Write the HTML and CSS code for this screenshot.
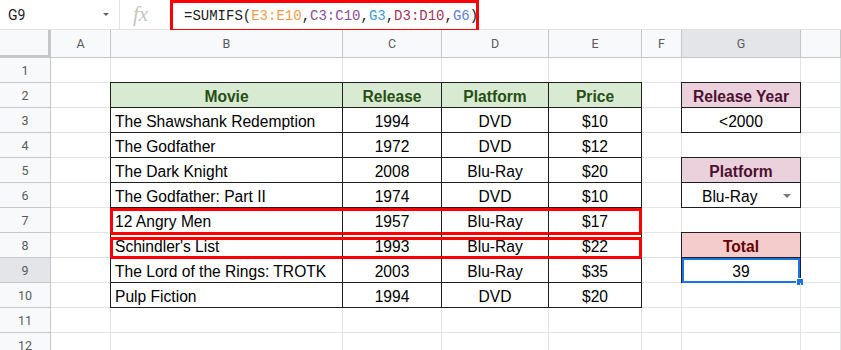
FILE: index.html
```html
<!DOCTYPE html>
<html lang="en">
<head>
    <meta charset="UTF-8">
    <meta name="viewport" content="width=device-width, initial-scale=1.0">
    <title>SUMIFS - Sheet</title>
    <link rel="stylesheet" href="styles.css">
</head>
<body>
    <div class="topbar">
        <div class="namebox"><span>G9</span><span class="caret"></span></div>
        <div class="fx">fx</div>
        <div class="formula">=SUMIFS(<span class="r1">E3:E10</span>,<span class="r2">C3:C10</span>,<span class="r3">G3</span>,<span class="r4">D3:D10</span>,<span class="r5">G6</span>)</div>
        <div class="rest"></div>
    </div>

    <div class="sheet">
        <div class="row head">
            <div class="corner"></div>
            <div class="ch">A</div>
            <div class="ch">B</div>
            <div class="ch">C</div>
            <div class="ch">D</div>
            <div class="ch">E</div>
            <div class="ch">F</div>
            <div class="ch sel">G</div>
            <div class="ch"></div>
        </div>

        <div class="row">
            <div class="rh">1</div>
            <div class="c"></div><div class="c"></div><div class="c"></div><div class="c"></div>
            <div class="c"></div><div class="c"></div><div class="c"></div><div class="c"></div>
        </div>

        <div class="row">
            <div class="rh">2</div>
            <div class="c"></div>
            <div class="c t th tl tt">Movie</div>
            <div class="c t th tt">Release</div>
            <div class="c t th tt">Platform</div>
            <div class="c t th tt">Price</div>
            <div class="c"></div>
            <div class="c t gh tl tt">Release Year</div>
            <div class="c"></div>
        </div>

        <div class="row">
            <div class="rh">3</div>
            <div class="c"></div>
            <div class="c t tl">The Shawshank Redemption</div>
            <div class="c t ctr">1994</div>
            <div class="c t ctr">DVD</div>
            <div class="c t ctr">$10</div>
            <div class="c"></div>
            <div class="c t tl ctr">&lt;2000</div>
            <div class="c"></div>
        </div>

        <div class="row">
            <div class="rh">4</div>
            <div class="c"></div>
            <div class="c t tl">The Godfather</div>
            <div class="c t ctr">1972</div>
            <div class="c t ctr">DVD</div>
            <div class="c t ctr">$12</div>
            <div class="c"></div>
            <div class="c"></div>
            <div class="c"></div>
        </div>

        <div class="row">
            <div class="rh">5</div>
            <div class="c"></div>
            <div class="c t tl">The Dark Knight</div>
            <div class="c t ctr">2008</div>
            <div class="c t ctr">Blu-Ray</div>
            <div class="c t ctr">$20</div>
            <div class="c"></div>
            <div class="c t gh tl tt">Platform</div>
            <div class="c"></div>
        </div>

        <div class="row">
            <div class="rh">6</div>
            <div class="c"></div>
            <div class="c t tl">The Godfather: Part II</div>
            <div class="c t ctr">1974</div>
            <div class="c t ctr">DVD</div>
            <div class="c t ctr">$10</div>
            <div class="c"></div>
            <div class="c t tl dd"><span>Blu-Ray</span><span class="arrow"></span></div>
            <div class="c"></div>
        </div>

        <div class="row">
            <div class="rh">7</div>
            <div class="c"></div>
            <div class="c t tl">12 Angry Men</div>
            <div class="c t ctr">1957</div>
            <div class="c t ctr">Blu-Ray</div>
            <div class="c t ctr">$17</div>
            <div class="c"></div>
            <div class="c"></div>
            <div class="c"></div>
            <div class="hl hl-a"></div>
        </div>

        <div class="row">
            <div class="rh">8</div>
            <div class="c"></div>
            <div class="c t tl">Schindler's List</div>
            <div class="c t ctr">1993</div>
            <div class="c t ctr">Blu-Ray</div>
            <div class="c t ctr">$22</div>
            <div class="c"></div>
            <div class="c t gt tl tt">Total</div>
            <div class="c"></div>
            <div class="hl hl-b"></div>
        </div>

        <div class="row">
            <div class="rh sel">9</div>
            <div class="c"></div>
            <div class="c t tl">The Lord of the Rings: TROTK</div>
            <div class="c t ctr">2003</div>
            <div class="c t ctr">Blu-Ray</div>
            <div class="c t ctr">$35</div>
            <div class="c"></div>
            <div class="c t tl ctr cur">39</div>
            <div class="c"></div>
        </div>

        <div class="row">
            <div class="rh">10</div>
            <div class="c"></div>
            <div class="c t tl">Pulp Fiction</div>
            <div class="c t ctr">1994</div>
            <div class="c t ctr">DVD</div>
            <div class="c t ctr">$20</div>
            <div class="c"></div>
            <div class="c"></div>
            <div class="c"></div>
        </div>

        <div class="row">
            <div class="rh">11</div>
            <div class="c"></div><div class="c"></div><div class="c"></div><div class="c"></div>
            <div class="c"></div><div class="c"></div><div class="c"></div><div class="c"></div>
        </div>

        <div class="row">
            <div class="rh">12</div>
            <div class="c"></div><div class="c"></div><div class="c"></div><div class="c"></div>
            <div class="c"></div><div class="c"></div><div class="c"></div><div class="c"></div>
        </div>
    </div>
</body>
</html>
```

FILE: styles.css
```css
body {
    margin: 0;
    background: #fff;
    font-family: "Liberation Sans", Arial, sans-serif;
    overflow: hidden;
}

/* formula bar */
.topbar {
    display: flex;
    height: 29px;
    border-bottom: 1px solid #e1e3e1;
}
.namebox {
    width: 120px;
    box-sizing: border-box;
    border-right: 1px solid #e1e3e1;
    display: flex;
    align-items: center;
    justify-content: space-between;
    padding: 0 10px 0 8px;
    font: 14px Roboto, sans-serif;
    color: #202124;
}
.caret {
    border-left: 3px solid transparent;
    border-right: 3px solid transparent;
    border-top: 3px solid #5f6368;
}
.fx {
    width: 50px;
    box-sizing: border-box;
    padding-left: 13px;
    display: flex;
    align-items: center;
    font: italic 21px "Liberation Serif", serif;
    color: #c4c4c4;
}
.formula {
    position: relative;
    width: 309px;
    box-sizing: border-box;
    padding: 2px 0 0 14px;
    display: flex;
    align-items: center;
    font: 14px "Liberation Mono", monospace;
    color: #202124;
}
.formula::after {
    content: "";
    position: absolute;
    left: 0;
    top: 0;
    right: 0;
    bottom: -3px;
    border: 3px solid #ff0000;
}
.r1 { color: #f29b4b; }
.r2 { color: #8a4d9e; }
.r3 { color: #3e9ad6; }
.r4 { color: #a3365a; }
.r5 { color: #5b80e2; }

/* grid */
.row {
    position: relative;
    display: grid;
    grid-template-columns: 51px 60px 232px 99px 107px 93px 40px 119px minmax(0, 1fr);
    height: 25px;
}
.row > div {
    box-sizing: border-box;
}
.head {
    height: 28px;
}
.corner {
    background: #f8f9fa;
    border-right: 3px solid #c4c7c5;
    border-bottom: 3px solid #c4c7c5;
}
.ch, .rh {
    background: #f8f9fa;
    border-right: 1px solid #c4c7c5;
    border-bottom: 1px solid #c4c7c5;
    display: flex;
    align-items: center;
    justify-content: center;
    font: 12.5px Roboto, sans-serif;
    color: #575a5e;
}
.sel {
    background: #e3e5e8;
}
.c {
    border-right: 1px solid #e2e3e3;
    border-bottom: 1px solid #e2e3e3;
    display: flex;
    align-items: flex-end;
    padding: 0 4px 1px;
    font-size: 15.6px;
    line-height: 18px;
    color: #000;
    white-space: nowrap;
}

/* bordered table cells */
.t {
    border-color: #1f1f1f;
}
.tl {
    box-shadow: -1px 0 0 #1f1f1f;
}
.tt {
    box-shadow: 0 -1px 0 #1f1f1f;
}
.tl.tt {
    box-shadow: -1px 0 0 #1f1f1f, 0 -1px 0 #1f1f1f, -1px -1px 0 #1f1f1f;
}
.ctr, .th, .gh, .gt {
    justify-content: center;
}
.th {
    background: #d9ead3;
    color: #274e13;
    font-weight: bold;
}
.gh {
    background: #ead1dc;
    color: #4c1130;
    font-weight: bold;
}
.gt {
    background: #f4cccc;
    color: #660000;
    font-weight: bold;
}
.dd {
    justify-content: space-between;
    padding: 0 9px 1px 20px;
}
.arrow {
    align-self: center;
    border-left: 4px solid transparent;
    border-right: 4px solid transparent;
    border-top: 4px solid #7b7b7b;
    margin-top: 2px;
}

/* annotation boxes */
.hl {
    position: absolute;
    left: 110px;
    width: 532px;
    box-sizing: border-box;
    border: 3px solid #ff0000;
}
.hl-a {
    top: 0;
    height: 27px;
}
.hl-b {
    top: 4px;
    height: 22px;
}

/* current cell */
.cur {
    position: relative;
}
.cur::before {
    content: "";
    position: absolute;
    left: 0;
    top: 0;
    right: 0;
    bottom: -1px;
    border: 2px solid #1a73e8;
}
.cur::after {
    content: "";
    position: absolute;
    right: -4px;
    bottom: -4px;
    width: 6px;
    height: 6px;
    background: #1a73e8;
    border: 1px solid #fff;
}
```
